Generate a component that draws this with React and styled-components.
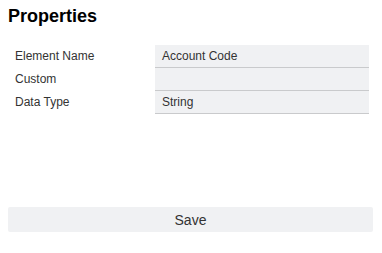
import React from 'react';
import styled, { createGlobalStyle } from 'styled-components';

const GlobalStyle = createGlobalStyle`
    html, body {
        margin: 0;
        padding: 0;
        background: #fff;
    }
    body {
        font-family: "Liberation Sans", Arial, sans-serif;
        color: #333;
    }
`;

const Panel = styled.div`
    width: 382px;
    height: 253px;
    padding: 0 8px;
    box-sizing: border-box;
    display: flex;
    flex-direction: column;
`;

const Title = styled.h2`
    margin: 0;
    padding-top: 5px;
    height: 45px;
    box-sizing: border-box;
    font-size: 18px;
    line-height: 22px;
    font-weight: bold;
    color: #000;
`;

const PropList = styled.div`
    display: grid;
    grid-template-columns: 147px 214px;
`;

const Label = styled.div`
    height: 23px;
    padding-left: 7px;
    font-size: 12px;
    line-height: 22px;
    color: #333;
`;

const Field = styled.div`
    height: 22px;
    padding-left: 7px;
    font-size: 12px;
    line-height: 22px;
    color: #333;
    background: #f0f1f3;
    border-bottom: 1px solid #c9cacc;
`;

const SaveButton = styled.button`
    margin-top: 93px;
    width: 365px;
    height: 25px;
    padding: 0;
    border: none;
    border-radius: 2px;
    background: #f0f1f3;
    font-family: "Liberation Sans", Arial, sans-serif;
    font-size: 14px;
    color: #333;
    cursor: pointer;
`;

const props = [
    { name: 'Element Name', value: 'Account Code' },
    { name: 'Custom', value: '' },
    { name: 'Data Type', value: 'String' }
];

export default function App() {
    return (
        <Panel>
            <GlobalStyle />
            <Title>Properties</Title>
            <PropList>
                {props.map(item => (
                    <React.Fragment key={item.name}>
                        <Label>{item.name}</Label>
                        <Field>{item.value}</Field>
                    </React.Fragment>
                ))}
            </PropList>
            <SaveButton>Save</SaveButton>
        </Panel>
    );
}
